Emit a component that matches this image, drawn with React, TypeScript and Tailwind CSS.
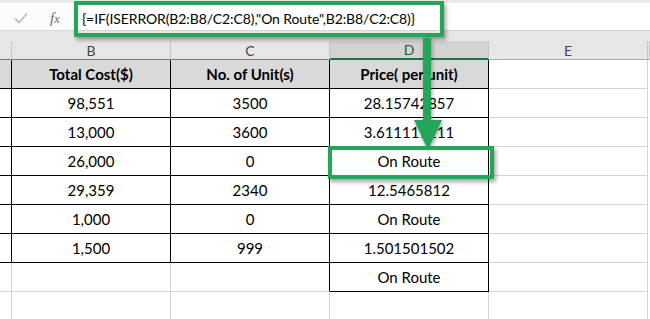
import React from "react"

const GREEN = "border-[#23a55a]"

// columns: A (sliver), B, C, D, E, F (sliver)
const rows: string[][] = [
  ["", "Total Cost($)", "No. of Unit(s)", "Price( per unit)"],
  ["", "98,551", "3500", "28.15742857"],
  ["", "13,000", "3600", "3.611111111"],
  ["", "26,000", "0", "On Route"],
  ["", "29,359", "2340", "12.5465812"],
  ["", "1,000", "0", "On Route"],
  ["", "1,500", "999", "1.501501502"],
  ["", "", "", "On Route"],
  ["", "", "", ""],
]

const widths = ["w-[12px]", "w-[159px]", "w-[159px]", "w-[159px]", "w-[159px]", "w-[2px]"]

// is the cell inside the bordered table?
const inTable = (r: number, c: number) => {
  if (c > 3) return false
  if (r <= 6) return true
  if (r === 7) return c === 3
  return false
}

const Cell = ({ r, c, text }: { r: number; c: number; text: string }) => {
  const boxed = inTable(r, c)
  // right edge is black when this cell or its right neighbour is boxed
  const rightBlack = boxed || inTable(r, c + 1)
  const right = c === 5 ? "border-r-0" : rightBlack ? "border-r border-r-black" : "border-r border-r-[#d4d4d4]"
  const bottom = c === 5 ? "border-b-0" : boxed ? "border-b border-b-black" : "border-b border-b-[#d4d4d4]"
  const bg = r === 0 && c <= 3 ? "bg-[#d9d9d9] font-bold" : "bg-white"
  return (
    <div
      className={`${widths[c]} ${right} ${bottom} ${bg} flex h-[29px] shrink-0 items-center justify-center text-[15px] text-black`}
    >
      {text}
    </div>
  )
}

const ColumnHeader = ({ label, c }: { label: string; c: number }) => {
  const selected = label === "D"
  return (
    <div
      className={`${widths[c]} flex h-[19px] shrink-0 items-center justify-center border-r border-r-[#c6c6c6] text-[14px] ${
        selected
          ? "border-b-2 border-b-[#217346] bg-[#d2d2d2] text-[#1b5e3a]"
          : c <= 3
            ? "border-b border-b-[#7a7a7a] bg-[#e6e6e6] text-[#444]"
            : "border-b border-b-[#ababab] bg-[#e6e6e6] text-[#444]"
      }`}
    >
      {label}
    </div>
  )
}

export default function App() {
  return (
    <div className="relative h-[319px] w-[650px] overflow-hidden bg-white font-['Lato','Liberation_Sans',sans-serif]">
      {/* formula bar */}
      <div className="h-[31px] bg-[#eaeaea] pt-[3px]">
        <div className="flex h-[28px] items-center border-b border-b-[#d5d5d5] bg-[#fcfcfc]">
          <div className="flex w-[72px] items-center pt-[3px]">
            <svg width="14" height="12" viewBox="0 0 14 12" className="ml-[14px]">
              <path d="M1 6.5 L5 10.5 L13 1.5" fill="none" stroke="#bdbdbd" strokeWidth="1.8" />
            </svg>
            <span className="ml-[22px] font-['Liberation_Serif',serif] text-[15px] italic text-[#6b6b6b]">
              f<span className="text-[12px]">x</span>
            </span>
          </div>
          <div className="flex h-full flex-1 items-center bg-white pl-[10px] pt-[3px] text-[14px] tracking-[-0.1px] text-black">
            {'{=IF(ISERROR(B2:B8/C2:C8),"On Route",B2:B8/C2:C8)}'}
          </div>
        </div>
      </div>

      {/* gap under the formula bar */}
      <div className="h-[10px] bg-[#e6e6e6]" />

      {/* column letters */}
      <div className="flex">
        {["", "B", "C", "D", "E", ""].map((l, i) => (
          <ColumnHeader key={i} label={l} c={i} />
        ))}
      </div>

      {/* grid */}
      <div className="flex flex-col">
        {rows.map((row, r) => (
          <div key={r} className="flex">
            {[...row, "", ""].map((t, c) => (
              <Cell key={c} r={r} c={c} text={t} />
            ))}
          </div>
        ))}
      </div>

      {/* highlight around the formula */}
      <div className={`absolute left-[74px] top-[1px] h-[36px] w-[370px] border-[4px] ${GREEN} shadow-[2px_3px_4px_rgba(0,0,0,0.35)]`} />

      {/* arrow down to the result */}
      <svg
        width="32"
        height="114"
        viewBox="0 0 32 114"
        className="absolute left-[412px] top-[38px] drop-shadow-[1px_2px_2px_rgba(0,0,0,0.35)]"
      >
        <rect x="11" y="0" width="8" height="84" fill="#23a55a" />
        <polygon points="2,82 30,82 16,112" fill="#23a55a" />
      </svg>

      {/* highlight around the result cell */}
      <div className={`absolute left-[328px] top-[146px] h-[33px] w-[166px] border-[4px] ${GREEN} shadow-[2px_3px_4px_rgba(0,0,0,0.35)]`} />
    </div>
  )
}
